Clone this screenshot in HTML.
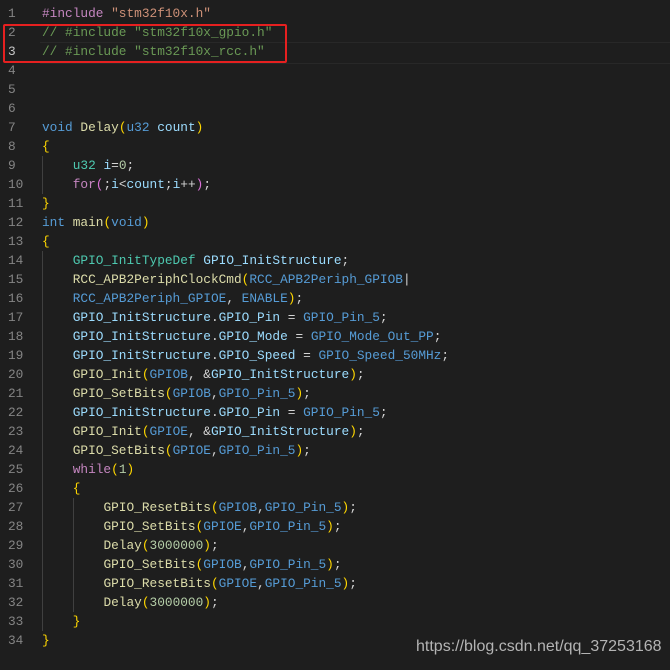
<!DOCTYPE html>
<html><head><meta charset="utf-8"><style>
html,body{margin:0;padding:0;background:#1e1e1e;width:670px;height:670px;overflow:hidden;position:relative}
.c{font-family:"Liberation Mono",monospace;font-size:12.8px;line-height:19px;white-space:pre;position:absolute;top:4px;color:#d4d4d4}
.n{left:8px;width:22px;text-align:left;color:#858585}
.code{left:42px}
.k{color:#c586c0}.b{color:#569cd6}.f{color:#dcdcaa}.t{color:#4ec9b0}.v{color:#9cdcfe}.s{color:#ce9178}.m{color:#6a9955}.p{color:#ffd700}.q{color:#da70d6}.num{color:#b5cea8}.w{color:#d4d4d4}.mc{color:#569cd6}
.g{position:absolute;width:1px;background:#404040}
</style></head><body>
<div style="position:absolute;left:40px;top:42px;width:630px;height:20px;border:1px solid #282828;border-left:0"></div>
<div class="g" style="left:42px;top:251px;height:380px"></div>
<div class="g" style="left:73px;top:498px;height:114px"></div>
<div class="g" style="left:42px;top:156px;height:38px"></div>
<div class="c n">1
2
<span style="color:#c6c6c6">3</span>
4
5
6
7
8
9
10
11
12
13
14
15
16
17
18
19
20
21
22
23
24
25
26
27
28
29
30
31
32
33
34</div>
<div class="c code"><span class="k">#include</span> <span class="s">"stm32f10x.h"</span>
<span class="m">// #include "stm32f10x_gpio.h"</span>
<span class="m">// #include "stm32f10x_rcc.h"</span>



<span class="b">void</span> <span class="f">Delay</span><span class="p">(</span><span class="b">u32</span> <span class="v">count</span><span class="p">)</span>
<span class="p">{</span>
    <span class="t">u32</span> <span class="v">i</span>=<span class="num">0</span>;
    <span class="k">for</span><span class="q">(</span>;<span class="v">i</span>&lt;<span class="v">count</span>;<span class="v">i</span>++<span class="q">)</span>;
<span class="p">}</span>
<span class="b">int</span> <span class="f">main</span><span class="p">(</span><span class="b">void</span><span class="p">)</span>
<span class="p">{</span>
    <span class="t">GPIO_InitTypeDef</span> <span class="v">GPIO_InitStructure</span>;
    <span class="f">RCC_APB2PeriphClockCmd</span><span class="p">(</span><span class="mc">RCC_APB2Periph_GPIOB</span>|
    <span class="mc">RCC_APB2Periph_GPIOE</span>, <span class="mc">ENABLE</span><span class="p">)</span>;
    <span class="v">GPIO_InitStructure</span>.<span class="v">GPIO_Pin</span> = <span class="mc">GPIO_Pin_5</span>;
    <span class="v">GPIO_InitStructure</span>.<span class="v">GPIO_Mode</span> = <span class="mc">GPIO_Mode_Out_PP</span>;
    <span class="v">GPIO_InitStructure</span>.<span class="v">GPIO_Speed</span> = <span class="mc">GPIO_Speed_50MHz</span>;
    <span class="f">GPIO_Init</span><span class="p">(</span><span class="mc">GPIOB</span>, &amp;<span class="v">GPIO_InitStructure</span><span class="p">)</span>;
    <span class="f">GPIO_SetBits</span><span class="p">(</span><span class="mc">GPIOB</span>,<span class="mc">GPIO_Pin_5</span><span class="p">)</span>;
    <span class="v">GPIO_InitStructure</span>.<span class="v">GPIO_Pin</span> = <span class="mc">GPIO_Pin_5</span>;
    <span class="f">GPIO_Init</span><span class="p">(</span><span class="mc">GPIOE</span>, &amp;<span class="v">GPIO_InitStructure</span><span class="p">)</span>;
    <span class="f">GPIO_SetBits</span><span class="p">(</span><span class="mc">GPIOE</span>,<span class="mc">GPIO_Pin_5</span><span class="p">)</span>;
    <span class="k">while</span><span class="p">(</span><span class="num">1</span><span class="p">)</span>
    <span class="p">{</span>
        <span class="f">GPIO_ResetBits</span><span class="p">(</span><span class="mc">GPIOB</span>,<span class="mc">GPIO_Pin_5</span><span class="p">)</span>;
        <span class="f">GPIO_SetBits</span><span class="p">(</span><span class="mc">GPIOE</span>,<span class="mc">GPIO_Pin_5</span><span class="p">)</span>;
        <span class="f">Delay</span><span class="p">(</span><span class="num">3000000</span><span class="p">)</span>;
        <span class="f">GPIO_SetBits</span><span class="p">(</span><span class="mc">GPIOB</span>,<span class="mc">GPIO_Pin_5</span><span class="p">)</span>;
        <span class="f">GPIO_ResetBits</span><span class="p">(</span><span class="mc">GPIOE</span>,<span class="mc">GPIO_Pin_5</span><span class="p">)</span>;
        <span class="f">Delay</span><span class="p">(</span><span class="num">3000000</span><span class="p">)</span>;
    <span class="p">}</span>
<span class="p">}</span></div>
<div style="position:absolute;left:3px;top:24px;width:280px;height:35px;border:2px solid #e62020;border-radius:2px"></div>
<div style="position:absolute;left:416px;top:638px;font-family:'Liberation Sans',sans-serif;font-size:16px;color:#b4b4b4">https://blog.csdn.net/qq_37253168</div>
</body></html>
